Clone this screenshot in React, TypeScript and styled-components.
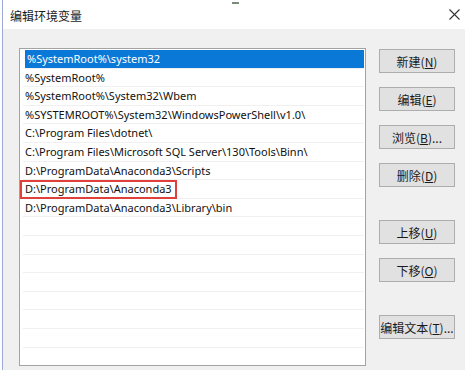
import styled, { createGlobalStyle } from 'styled-components';

const GlobalStyle = createGlobalStyle`
  html, body {
    margin: 0;
    padding: 0;
    background: #ffffff;
  }
  body {
    font-family: "Noto Sans", "Noto Sans CJK SC", sans-serif;
    font-size: 12px;
    color: #000;
  }
`;

const Window = styled.div`
  width: 462px;
  height: 370px;
  margin-left: 2px;
  border-left: 1px solid #9eaad6;
  display: flex;
  flex-direction: column;
  overflow: hidden;
`;

const TitleBar = styled.div`
  height: 29px;
  flex-shrink: 0;
  background: #ffffff;
  display: flex;
  align-items: center;
  justify-content: space-between;
  padding: 0 0 0 7px;
  position: relative;
`;

const Title = styled.span`
  font-family: "Noto Sans CJK SC", sans-serif;
  font-size: 12px;
  color: #1a1a1a;
  margin-top: 1px;
`;

const Dash = styled.span`
  position: absolute;
  left: 229px;
  top: 2px;
  width: 7px;
  height: 2px;
  background: #7c8a7c;
`;

const CloseButton = styled.div`
  width: 22px;
  height: 29px;
  display: flex;
  align-items: center;
  justify-content: center;
`;

const Body = styled.div`
  flex: 1;
  background: #f0f0f0;
  display: flex;
  padding: 19px 10px 0 16px;
  gap: 13px;
`;

const ListBox = styled.div`
  width: 347px;
  height: 318px;
  box-sizing: border-box;
  background: #ffffff;
  border: 1px solid #a3a3a3;
  padding: 1px 1px 0 3px;
  overflow: hidden;
`;

const Row = styled.div<{ $selected?: boolean }>`
  height: 18.6px;
  box-sizing: border-box;
  border-bottom: 1px solid #f0f0f0;
  background: ${({ $selected }) => ($selected ? '#0a78d7' : 'transparent')};
  color: ${({ $selected }) => ($selected ? '#ffffff' : '#111111')};
  padding-left: 2px;
  line-height: 17.6px;
  white-space: nowrap;
  font-family: "Noto Sans", "Noto Sans CJK SC", sans-serif;
  font-size: 11px;
  margin-left: ${({ $selected }) => ($selected ? '2px' : '0')};
`;

const Highlight = styled.span`
  position: relative;
  &::after {
    content: '';
    position: absolute;
    left: -5px;
    right: -5px;
    top: -1px;
    bottom: -3px;
    border: 2px solid #e0403a;
  }
`;

const ButtonColumn = styled.div`
  width: 76px;
  display: flex;
  flex-direction: column;
  padding-top: 1px;
`;

const Button = styled.button<{ $gapBefore?: number }>`
  width: 76px;
  height: 24px;
  margin-top: ${({ $gapBefore }) => $gapBefore ?? 0}px;
  background: #e1e1e1;
  border: 1px solid #adadad;
  padding: 0;
  font-family: "Noto Sans CJK SC", sans-serif;
  font-size: 12px;
  color: #1a1a1a;
  display: flex;
  align-items: center;
  justify-content: center;
`;

const Key = styled.span`
  text-decoration: underline;
`;

const paths = [
  '%SystemRoot%\\system32',
  '%SystemRoot%',
  '%SystemRoot%\\System32\\Wbem',
  '%SYSTEMROOT%\\System32\\WindowsPowerShell\\v1.0\\',
  'C:\\Program Files\\dotnet\\',
  'C:\\Program Files\\Microsoft SQL Server\\130\\Tools\\Binn\\',
  'D:\\ProgramData\\Anaconda3\\Scripts',
  'D:\\ProgramData\\Anaconda3',
  'D:\\ProgramData\\Anaconda3\\Library\\bin',
];

const buttons = [
  { label: '新建', key: 'N', tail: '', gap: 0 },
  { label: '编辑', key: 'E', tail: '', gap: 14 },
  { label: '浏览', key: 'B', tail: '...', gap: 14 },
  { label: '删除', key: 'D', tail: '', gap: 14 },
  { label: '上移', key: 'U', tail: '', gap: 33 },
  { label: '下移', key: 'O', tail: '', gap: 14 },
  { label: '编辑文本', key: 'T', tail: '...', gap: 33 },
];

const emptyRows = Array.from({ length: 9 });

export default function App() {
  return (
    <>
      <GlobalStyle />
      <Window>
        <TitleBar>
          <Title>编辑环境变量</Title>
          <Dash />
          <CloseButton>
            <svg width="11" height="11" viewBox="0 0 11 11">
              <path d="M0.5 0.5 L10.5 10.5 M10.5 0.5 L0.5 10.5" stroke="#333" strokeWidth="1.1" fill="none" />
            </svg>
          </CloseButton>
        </TitleBar>
        <Body>
          <ListBox>
            {paths.map((p, i) => (
              <Row key={i} $selected={i === 0}>
                {i === 7 ? <Highlight>{p}</Highlight> : p}
              </Row>
            ))}
            {emptyRows.map((_, i) => (
              <Row key={`e${i}`} />
            ))}
          </ListBox>
          <ButtonColumn>
            {buttons.map((b) => (
              <Button key={b.key} $gapBefore={b.gap}>
                {b.label}(<Key>{b.key}</Key>){b.tail}
              </Button>
            ))}
          </ButtonColumn>
        </Body>
      </Window>
    </>
  );
}
